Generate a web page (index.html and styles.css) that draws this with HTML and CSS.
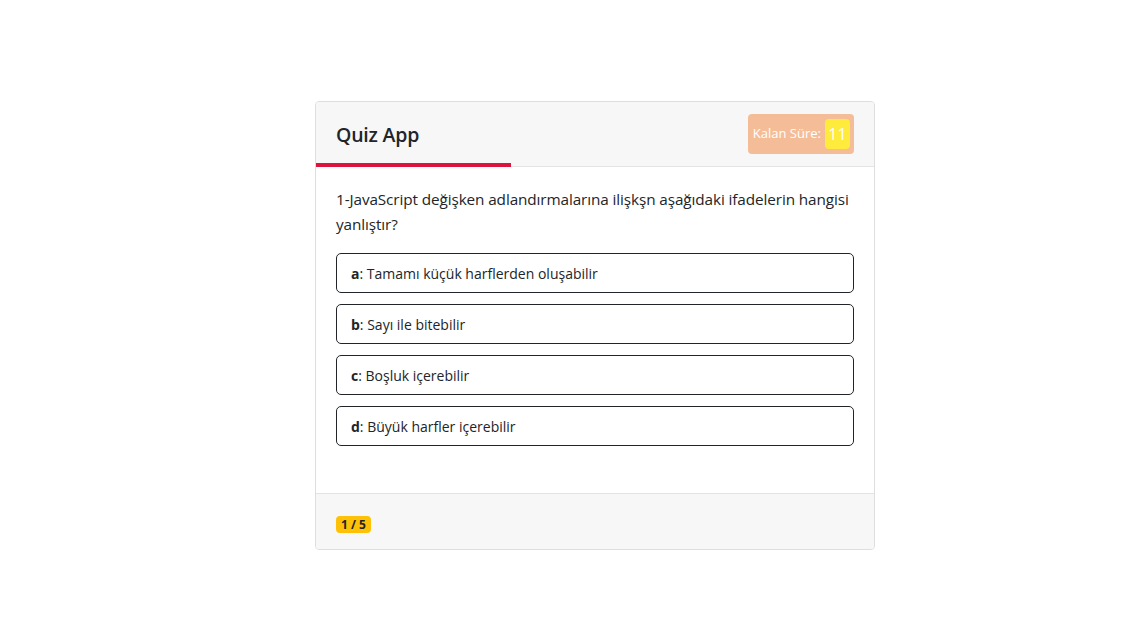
FILE: index.html
```html
<!DOCTYPE html>
<html lang="tr">
<head>
<meta charset="utf-8">
<title>Quiz App</title>
<link rel="stylesheet" href="styles.css">
</head>
<body>
<div class="page">
  <div class="card">
    <div class="card-header">
      <h5 class="title">Quiz App</h5>
      <div class="timer">
        <span class="timer-label">Kalan Süre:</span>
        <span class="timer-value">11</span>
      </div>
      <div class="progress" style="width: 35%"></div>
    </div>
    <div class="card-body">
      <p class="question">1-JavaScript değişken adlandırmalarına ilişkşn aşağıdaki ifadelerin hangisi yanlıştır?</p>
      <div class="options">
        <div class="option"><b>a</b>: Tamamı küçük harflerden oluşabilir</div>
        <div class="option"><b>b</b>: Sayı ile bitebilir</div>
        <div class="option"><b>c</b>: Boşluk içerebilir</div>
        <div class="option"><b>d</b>: Büyük harfler içerebilir</div>
      </div>
    </div>
    <div class="card-footer">
      <span class="badge">1 / 5</span>
    </div>
  </div>
</div>
</body>
</html>
```

FILE: styles.css
```css
* { box-sizing: border-box; }
html, body { margin: 0; padding: 0; }
body {
  background: #fff;
  color: #212529;
  font-family: "Open Sans", "Noto Sans", sans-serif;
  font-size: 16px;
  line-height: 1.5;
}
.page {
  padding: 101px 0 0 315px;
}
.card {
  width: 560px;
  border: 1px solid #dedede;
  border-radius: 4px;
  background: #fff;
  overflow: hidden;
}
.card-header {
  position: relative;
  display: flex;
  align-items: center;
  justify-content: space-between;
  height: 65px;
  padding: 1px 20px 0;
  background: #f7f7f7;
  border-bottom: 1px solid #e3e3e3;
}
.title {
  margin: 0;
  font-size: 19.5px;
  font-weight: 600;
  letter-spacing: -0.2px;
  color: #212529;
}
.timer {
  display: flex;
  align-items: center;
  height: 40px;
  padding: 0 4px 0 5px;
  background: #f5bd97;
  border-radius: 4px;
  color: #fff;
  margin-top: -2px;
}
.timer-label {
  font-size: 13px;
  margin-right: 4px;
}
.timer-value {
  display: flex;
  align-items: center;
  justify-content: center;
  width: 25px;
  height: 30px;
  background: #ffeb3b;
  border-radius: 4px;
  font-size: 16px;
}
.progress {
  position: absolute;
  left: 0;
  bottom: -1px;
  height: 4px;
  background: #dc143c;
}
.card-body {
  padding: 20px 20px 47px;
}
.question {
  margin: 0 0 16px;
  font-size: 15.3px;
  letter-spacing: -0.1px;
  line-height: 25px;
}
.options {
  display: flex;
  flex-direction: column;
  gap: 11px;
}
.option {
  height: 40px;
  display: flex;
  align-items: center;
  padding: 0 14px;
  border: 1px solid #212529;
  border-radius: 5px;
  font-size: 14px;
}
.option b { font-weight: 700; }
.card-footer {
  height: 56px;
  display: flex;
  align-items: center;
  padding: 5px 20px 0;
  background: #f7f7f7;
  border-top: 1px solid #e3e3e3;
}
.badge {
  display: inline-block;
  padding: 0 5px;
  height: 17px;
  line-height: 17px;
  background: #ffc107;
  border-radius: 4px;
  font-size: 12px;
  font-weight: 700;
  color: #212529;
}
```
